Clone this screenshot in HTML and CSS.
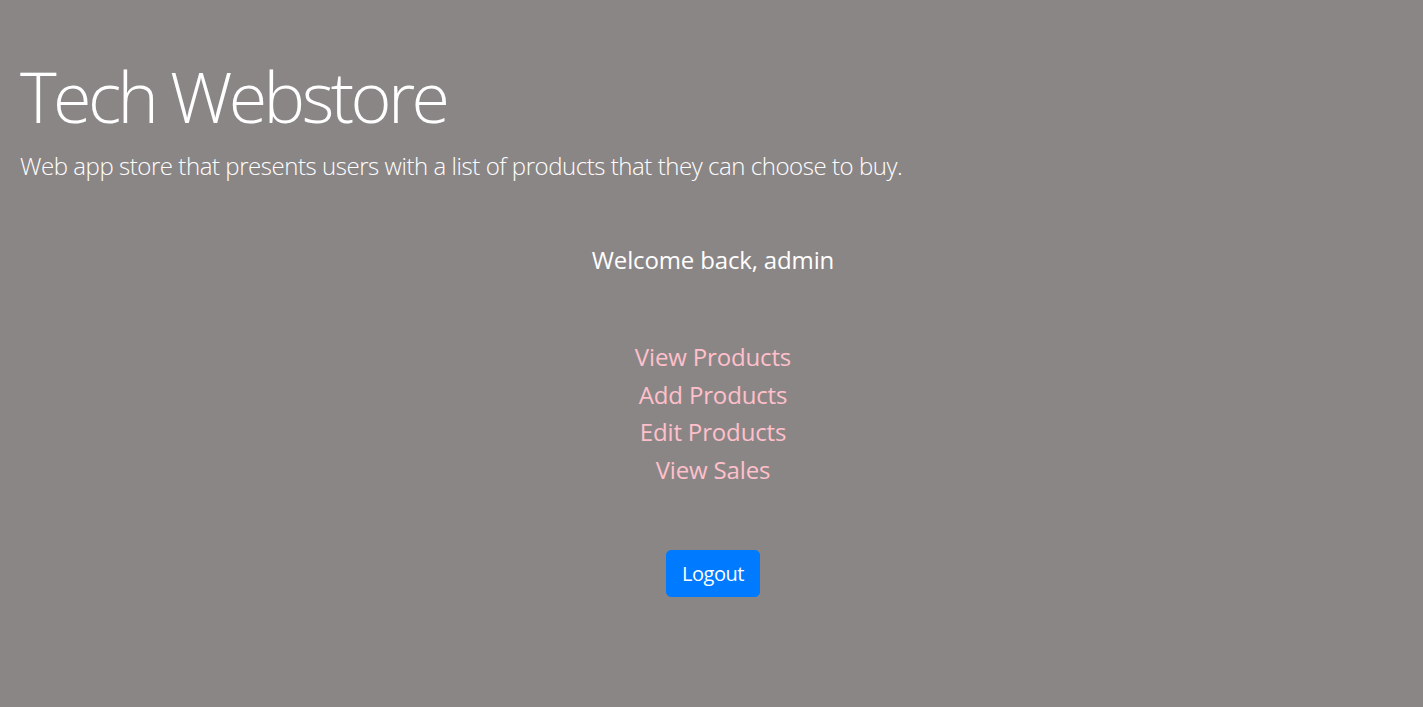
FILE: index.html
```html
<!DOCTYPE html>
<html lang="en">
<head>
<meta charset="utf-8">
<title>Tech Webstore</title>
<link rel="stylesheet" href="styles.css">
</head>
<body>
<header class="jumbotron">
  <h1 class="display">Tech Webstore</h1>
  <p class="lead">Web app store that presents users with a list of products that they can choose to buy.</p>
</header>
<main class="panel">
  <h4 class="welcome">Welcome back, admin</h4>
  <nav class="links">
    <a href="#">View Products</a>
    <a href="#">Add Products</a>
    <a href="#">Edit Products</a>
    <a href="#">View Sales</a>
  </nav>
  <button class="btn-logout" type="button">Logout</button>
</main>
</body>
</html>
```
FILE: styles.css
```css
html, body {
  margin: 0;
  padding: 0;
}
body {
  background: #8b8686;
  color: #ffffff;
  font-family: "Open Sans", "Noto Sans", "Liberation Sans", sans-serif;
  min-height: 707px;
}
.jumbotron {
  padding: 54px 20px 0 20px;
}
.display {
  margin: 0;
  font-size: 70px;
  font-weight: 300;
  line-height: 84px;
  letter-spacing: -3.6px;
}
.lead {
  margin: 10px 0 0 0;
  font-size: 24px;
  font-weight: 300;
  line-height: 36px;
  letter-spacing: -0.45px;
}
.panel {
  display: flex;
  flex-direction: column;
  align-items: center;
  padding: 58px 0 0 3px;
}
.welcome {
  margin: 0;
  font-size: 24px;
  font-weight: 400;
  line-height: 36px;
  letter-spacing: -0.15px;
}
.links {
  display: flex;
  flex-direction: column;
  align-items: center;
  margin-top: 60px;
}
.links a {
  color: #ffc0cb;
  text-decoration: none;
  font-size: 24px;
  line-height: 37.5px;
  letter-spacing: -0.15px;
}
.btn-logout {
  margin-top: 62px;
  background: #007bff;
  color: #ffffff;
  border: 1px solid #007bff;
  border-radius: 5px;
  font-family: inherit;
  font-size: 20px;
  line-height: 30px;
  padding: 8px 15px 7px 15px;
  letter-spacing: -0.5px;
  cursor: pointer;
}
```
